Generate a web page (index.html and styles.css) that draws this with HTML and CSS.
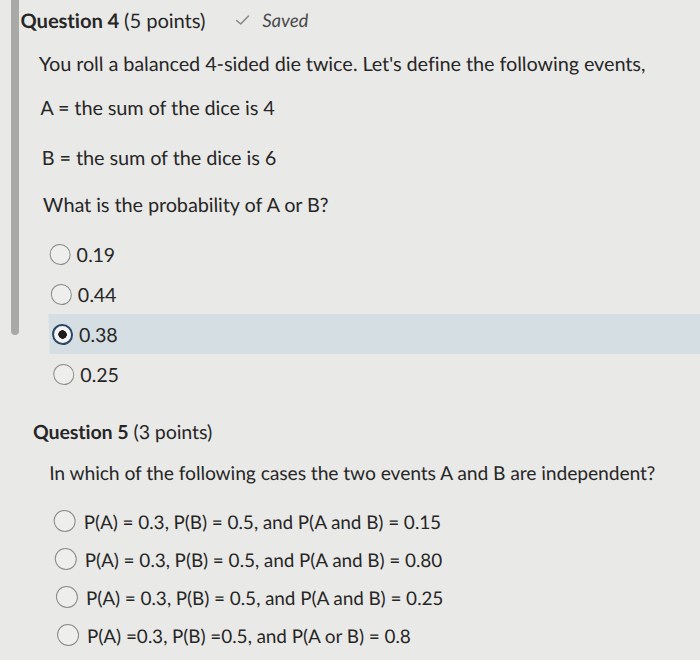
FILE: index.html
```html
<!DOCTYPE html>
<html lang="en">
<head>
<meta charset="utf-8">
<title>Quiz</title>
<link rel="stylesheet" href="styles.css">
</head>
<body>
<div class="page">
  <div class="rail"><div class="thumb"></div></div>
  <main class="content">
    <section class="question q4">
      <h2 class="qtitle"><strong>Question 4</strong> (5 points)
        <span class="saved"><svg class="check" width="16" height="12" viewBox="0 0 16 12"><path d="M2 6.5 L6 10 L14 2" fill="none" stroke="#8a8a8a" stroke-width="1.6" stroke-linecap="round" stroke-linejoin="round"/></svg><em>Saved</em></span>
      </h2>
      <p class="body l1">You roll a balanced 4-sided die twice. Let's define the following events,</p>
      <p class="body l2">A = the sum of the dice is 4</p>
      <p class="body l3">B = the sum of the dice is 6</p>
      <p class="body l4">What is the probability of A or B?</p>
      <ul class="options opts4">
        <li class="opt"><span class="radio"></span>0.19</li>
        <li class="opt"><span class="radio"></span>0.44</li>
        <li class="opt selected"><span class="radio checked"></span>0.38</li>
        <li class="opt"><span class="radio"></span>0.25</li>
      </ul>
    </section>
    <section class="question q5">
      <h2 class="qtitle"><strong>Question 5</strong> (3 points)</h2>
      <p class="body l5">In which of the following cases the two events A and B are independent?</p>
      <ul class="options opts5">
        <li class="opt"><span class="radio"></span>P(A) = 0.3, P(B) = 0.5, and P(A and B) = 0.15</li>
        <li class="opt"><span class="radio"></span>P(A) = 0.3, P(B) = 0.5, and P(A and B) = 0.80</li>
        <li class="opt"><span class="radio"></span>P(A) = 0.3, P(B) = 0.5, and P(A and B) = 0.25</li>
        <li class="opt"><span class="radio"></span>P(A) =0.3, P(B) =0.5, and P(A or B) = 0.8</li>
      </ul>
    </section>
  </main>
</div>
</body>
</html>
```
FILE: styles.css
```css
html, body {
  margin: 0;
  padding: 0;
  background: #e9e9e7;
  overflow: hidden;
}
body {
  width: 700px;
  height: 660px;
  font-family: Lato, "Liberation Sans", sans-serif;
  color: #262626;
  font-variant-ligatures: none;
}
.page {
  display: flex;
  height: 660px;
}
.rail {
  width: 20px;
  flex: none;
  padding-left: 11px;
  box-sizing: border-box;
  background: linear-gradient(to right, transparent 20px, #e4e4e2 20px);
}
.thumb {
  width: 8px;
  height: 335px;
  background: #a9a9a7;
  border-radius: 0 0 4px 4px;
}
.content {
  flex: 1;
  transform: skewX(1.72deg);
  transform-origin: 0 0;
  padding-top: 8px;
}
.question { margin: 0; }
.qtitle {
  margin: 0;
  font-size: 20px;
  line-height: 24px;
  font-weight: 400;
  display: flex;
  align-items: center;
}
.qtitle strong { font-weight: 700; margin-right: 5px; }
.saved {
  display: inline-flex;
  align-items: center;
  margin-left: 29px;
  color: #4a4a4a;
  font-size: 18.5px;
}
.check { margin-right: 12px; }
.body {
  margin: 0;
  font-size: 19.7px;
  line-height: 24px;
  padding-left: 17px;
}
.l1 { margin-top: 20px; }
.l2 { margin-top: 20px; }
.l3 { margin-top: 26px; }
.l4 { margin-top: 23px; }
.options {
  list-style: none;
  margin: 17px 0 0;
  padding: 0;
}
.opt {
  display: flex;
  align-items: center;
  font-size: 19.5px;
}
.opts4 .opt {
  height: 40px;
  margin-left: 19px;
  padding-left: 3px;
}
.opts4 .selected {
  background: #d5dee2;
}
.radio {
  width: 21px;
  height: 21px;
  border: 1.5px solid #8b8b8b;
  border-radius: 50%;
  box-sizing: border-box;
  background: #eeeeec;
  margin-right: 6px;
  flex: none;
}
.radio.checked {
  border: 2px solid #2c4667;
  background: radial-gradient(circle, #1e1e1e 0 4px, #f4f4f4 4.5px);
}
.q5 .qtitle { margin-top: 26px; font-size: 19.4px; }
.l5 { margin-top: 17px; font-size: 19.1px; padding-left: 15px; }
.opts5 .opt {
  height: 38px;
  margin-left: 18px;
  font-size: 18.8px;
}
.opts5 .radio { width: 22px; height: 22px; margin-right: 8px; }
```
